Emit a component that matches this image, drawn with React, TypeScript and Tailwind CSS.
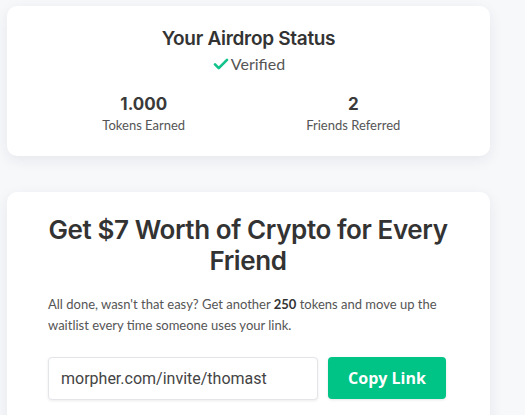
import React from 'react';

const Check: React.FC = () => (
  <svg viewBox="0 0 24 24" className="w-[18px] h-[18px] text-[#12c28b]" fill="none" stroke="currentColor" strokeWidth={3.6} strokeLinecap="round" strokeLinejoin="round">
    <path d="M4 12.5l5 5L20 6.5" />
  </svg>
);

export default function App() {
  return (
    <div className="min-h-screen w-[525px] h-[415px] overflow-hidden bg-[#f7f8fa] pl-[7px] pr-[35px] pt-[6px]" style={{ fontFamily: 'Lato, sans-serif' }}>
      {/* Status card */}
      <div className="bg-white rounded-[10px] shadow-[0_4px_14px_rgba(30,40,70,0.08)] h-[150px] px-8 pt-[20px]">
        <h1 className="text-center text-[19px] leading-[26px] font-semibold tracking-[-0.3px] text-[#333]" style={{ fontFamily: 'Inter, sans-serif' }}>
          Your Airdrop Status
        </h1>
        <div className="flex items-center justify-center gap-[1px] mt-[1px] text-[16px] leading-[22px] text-[#555]">
          <Check />
          <span>Verified</span>
        </div>
        <div className="grid grid-cols-2 mt-[19px]">
          <div className="flex flex-col items-center">
            <span className="text-[17px] leading-[20px] font-bold text-[#3a3a3a]" style={{ fontFamily: 'Inter, sans-serif' }}>1.000</span>
            <span className="text-[13px] leading-[18px] mt-[2px] text-[#555]">Tokens Earned</span>
          </div>
          <div className="flex flex-col items-center">
            <span className="text-[17px] leading-[20px] font-bold text-[#3a3a3a]" style={{ fontFamily: 'Inter, sans-serif' }}>2</span>
            <span className="text-[13px] leading-[18px] mt-[2px] text-[#555]">Friends Referred</span>
          </div>
        </div>
      </div>

      {/* Invite card */}
      <div className="bg-white rounded-[10px] shadow-[0_4px_14px_rgba(30,40,70,0.08)] mt-[36px] h-[260px] pl-[41px] pr-[42px] pt-[22px]">
        <h2 className="text-center text-[26px] leading-[31px] font-semibold tracking-[-0.4px] text-[#333]" style={{ fontFamily: 'Inter, sans-serif' }}>
          Get $7 Worth of Crypto for Every Friend
        </h2>
        <p className="mt-[18px] text-[13px] leading-[21px] text-[#555]">
          All done, wasn't that easy? Get another <b className="font-bold text-[#333]">250</b> tokens and move up the waitlist every time someone uses your link.
        </p>
        <div className="flex gap-[10px] mt-[21px]">
          <div className="w-[270px] h-[43px] border border-[#e3e5e8] rounded-[4px] bg-white shadow-[0_1px_3px_rgba(0,0,0,0.08)] flex items-center px-[12px] text-[16px] text-[#444]" style={{ fontFamily: 'Roboto, sans-serif' }}>
            morpher.com/invite/thomast
          </div>
          <button className="w-[118px] h-[42px] rounded-[4px] bg-[#00c386] text-white font-bold text-[16px] shadow-[0_1px_3px_rgba(0,0,0,0.1)]" style={{ fontFamily: '"Open Sans", sans-serif' }}>
            Copy Link
          </button>
        </div>
      </div>
    </div>
  );
}
